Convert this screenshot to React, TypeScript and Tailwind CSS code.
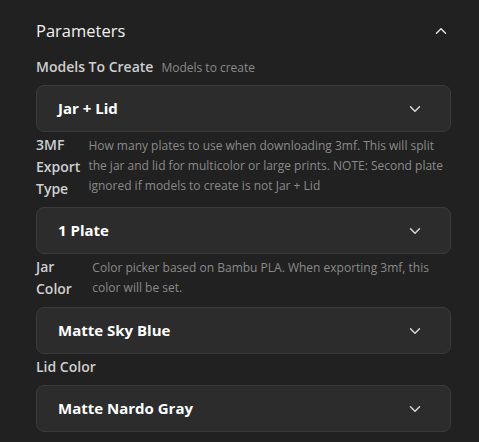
import { ChevronDown, ChevronUp } from "lucide-react";

type Field = {
  label: string;
  description?: string;
  value: string;
};

const fields: Field[] = [
  { label: "Models To Create", description: "Models to create", value: "Jar + Lid" },
  {
    label: "3MF Export Type",
    description:
      "How many plates to use when downloading 3mf. This will split the jar and lid for multicolor or large prints. NOTE: Second plate ignored if models to create is not Jar + Lid",
    value: "1 Plate",
  },
  {
    label: "Jar Color",
    description: "Color picker based on Bambu PLA. When exporting 3mf, this color will be set.",
    value: "Matte Sky Blue",
  },
  { label: "Lid Color", value: "Matte Nardo Gray" },
];

function SelectBox({ value }: { value: string }) {
  return (
    <button className="flex h-[47px] w-full items-center justify-between rounded-lg border border-[#3a3a3a] bg-[#2c2c2c] pl-[21px] pr-[26px] text-left">
      <span className="text-[15px] font-bold text-white">{value}</span>
      <ChevronDown className="h-[18px] w-[18px] text-[#d8d8d8]" strokeWidth={2} />
    </button>
  );
}

export default function App() {
  return (
    <div
      className="min-h-[442px] w-full bg-[#212121] pl-[36px] pr-[28px] pt-[19px]"
      style={{ fontFamily: '"Open Sans", "Noto Sans", sans-serif' }}
    >
      <div className="flex items-center justify-between pb-[13px]">
        <h2 className="text-[16.5px] font-normal leading-[24px] text-[#f0f0f0]">Parameters</h2>
        <ChevronUp className="mr-[1px] h-[18px] w-[18px] text-[#e0e0e0]" strokeWidth={2} />
      </div>

      <div className="flex flex-col">
        {fields.map((f) => (
          <div key={f.label} className="mb-[2px] flex flex-col">
            <div className="flex items-start gap-2">
              <span className="text-[14px] font-semibold leading-[22px] text-[#cfcfcf]">{f.label}</span>
              {f.description && (
                <span className="pt-[2px] text-[12px] leading-[20px] text-[#8a8a8a]">{f.description}</span>
              )}
            </div>
            <div className="mt-[7px]">
              <SelectBox value={f.value} />
            </div>
          </div>
        ))}
      </div>
    </div>
  );
}
